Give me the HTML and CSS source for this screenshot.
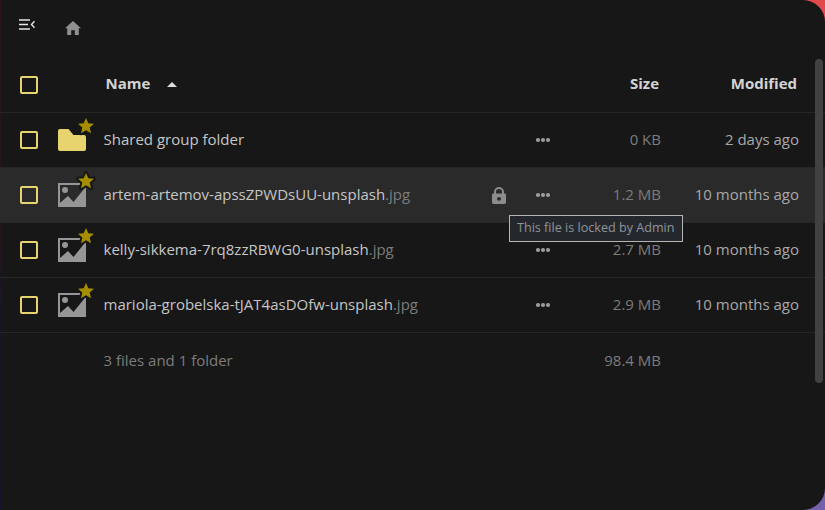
FILE: index.html
```html
<!DOCTYPE html>
<html lang="en">
<head>
<meta charset="utf-8">
<title>Files</title>
<link rel="stylesheet" href="styles.css">
</head>
<body>
<main class="app">
  <nav class="bar">
    <button class="menu" aria-label="Close navigation">
      <svg width="16" height="12" viewBox="0 0 16 12"><path d="M0 1h11M0 5.500h9M0 10h11" stroke="#e6e6e6" stroke-width="1.600" fill="none"/><path d="M15.500 2.200 12.500 5.500 15.500 8.800" stroke="#e6e6e6" stroke-width="1.400" fill="none"/></svg>
    </button>
    <a class="home" aria-label="Home">
      <svg width="16" height="14" viewBox="0 0 16 14"><path d="M8 0 0 7.200h2.200V14h4V9.200h3.600V14h4V7.200H16Z" fill="#8f8f8f"/></svg>
    </a>
  </nav>
  <div class="list">
    <div class="row head">
      <span class="check-cell"><i class="check"></i></span>
      <span class="icon-cell"></span>
      <span class="name sort">Name<i class="caret"></i></span>
      <span class="size">Size</span>
      <span class="date">Modified</span>
    </div>
    <div class="row">
      <span class="check-cell"><i class="check"></i></span>
      <span class="icon-cell">
        <svg width="28" height="22" viewBox="0 0 28 22"><path d="M2 0h8.500l5 6H26a2 2 0 0 1 2 2v12a2 2 0 0 1-2 2H2a2 2 0 0 1-2-2V2a2 2 0 0 1 2-2Z" fill="#e8d46e"/></svg>
        <svg class="star" width="22" height="22" viewBox="-3 -3 22 22"><path d="M8 0l2.300 5.300 5.700.5-4.300 3.800 1.300 5.600L8 12.200 3 15.200l1.300-5.600L0 5.800l5.700-.5Z"/></svg>
      </span>
      <span class="name">Shared group folder</span>
      <span class="lock-cell"></span>
      <span class="more"><i></i><i></i><i></i></span>
      <span class="cell-size">0 KB</span>
      <span class="cell-date">2 days ago</span>
    </div>
    <div class="row active">
      <span class="check-cell"><i class="check"></i></span>
      <span class="icon-cell">
        <svg width="28" height="24" viewBox="0 0 28 24"><path fill-rule="evenodd" d="M0 0h28v24H0ZM2 2v18l8-7 5.500 6L26 6V2ZM7 4a3 3 0 1 0 0 6 3 3 0 0 0 0-6Z" fill="#969696"/></svg>
        <svg class="star" width="22" height="22" viewBox="-3 -3 22 22"><path d="M8 0l2.300 5.300 5.700.5-4.300 3.800 1.300 5.600L8 12.200 3 15.200l1.300-5.600L0 5.800l5.700-.5Z"/></svg>
      </span>
      <span class="name">artem-artemov-apssZPWDsUU-unsplash<em>.jpg</em></span>
      <span class="lock-cell">
        <svg width="14" height="17" viewBox="0 0 14 18" preserveAspectRatio="none"><path fill-rule="evenodd" d="M7 0a5 5 0 0 1 5 5v2h.500A1.500 1.500 0 0 1 14 8.500v8a1.500 1.500 0 0 1-1.500 1.500h-11A1.500 1.500 0 0 1 0 16.500v-8A1.500 1.500 0 0 1 1.500 7H2V5a5 5 0 0 1 5-5Zm0 2a3 3 0 0 0-3 3v2h6V5a3 3 0 0 0-3-3Zm0 8.500a2 2 0 1 0 0 4 2 2 0 0 0 0-4Z" fill="#8c8c8c"/></svg>
      </span>
      <span class="more"><i></i><i></i><i></i></span>
      <span class="cell-size">1.2 MB</span>
      <span class="cell-date">10 months ago</span>
      <span class="tooltip">This file is locked by Admin</span>
    </div>
    <div class="row">
      <span class="check-cell"><i class="check"></i></span>
      <span class="icon-cell">
        <svg width="28" height="24" viewBox="0 0 28 24"><path fill-rule="evenodd" d="M0 0h28v24H0ZM2 2v18l8-7 5.500 6L26 6V2ZM7 4a3 3 0 1 0 0 6 3 3 0 0 0 0-6Z" fill="#969696"/></svg>
        <svg class="star" width="22" height="22" viewBox="-3 -3 22 22"><path d="M8 0l2.300 5.300 5.700.5-4.300 3.800 1.300 5.600L8 12.200 3 15.200l1.300-5.600L0 5.800l5.700-.5Z"/></svg>
      </span>
      <span class="name">kelly-sikkema-7rq8zzRBWG0-unsplash<em>.jpg</em></span>
      <span class="lock-cell"></span>
      <span class="more"><i></i><i></i><i></i></span>
      <span class="cell-size">2.7 MB</span>
      <span class="cell-date">10 months ago</span>
    </div>
    <div class="row">
      <span class="check-cell"><i class="check"></i></span>
      <span class="icon-cell">
        <svg width="28" height="24" viewBox="0 0 28 24"><path fill-rule="evenodd" d="M0 0h28v24H0ZM2 2v18l8-7 5.500 6L26 6V2ZM7 4a3 3 0 1 0 0 6 3 3 0 0 0 0-6Z" fill="#969696"/></svg>
        <svg class="star" width="22" height="22" viewBox="-3 -3 22 22"><path d="M8 0l2.300 5.300 5.700.5-4.300 3.800 1.300 5.600L8 12.200 3 15.200l1.300-5.600L0 5.800l5.700-.5Z"/></svg>
      </span>
      <span class="name">mariola-grobelska-tJAT4asDOfw-unsplash<em>.jpg</em></span>
      <span class="lock-cell"></span>
      <span class="more"><i></i><i></i><i></i></span>
      <span class="cell-size">2.9 MB</span>
      <span class="cell-date">10 months ago</span>
    </div>
    <div class="row foot">
      <span class="check-cell"></span>
      <span class="icon-cell"></span>
      <span class="name">3 files and 1 folder</span>
      <span class="lock-cell"></span>
      <span class="more"></span>
      <span class="cell-size">98.4 MB</span>
      <span class="cell-date"></span>
    </div>
  </div>
  <div class="scrollbar"></div>
</main>
</body>
</html>
```
FILE: styles.css
```css
* { box-sizing: border-box; }
html, body { height: 100%; }
body {
  margin: 0;
  overflow: hidden;
  background: linear-gradient(180deg, #e04a4c 0%, #e04a4c 6%, #7560ab 94%, #7560ab 100%);
  font-family: "Open Sans", "Noto Sans", sans-serif;
  font-size: 15px;
  color: #c6c6c6;
}
.app {
  position: relative;
  height: 510px;
  background: linear-gradient(180deg, #2c1516, #15152c) left / 1px 100% no-repeat, #171717;
  border-radius: 0 22px 22px 0;
}
.bar {
  display: flex;
  align-items: center;
  height: 56px;
  padding-left: 19px;
}
.menu {
  width: 16px;
  height: 12px;
  margin: -7px 0 0 0;
  padding: 0;
  border: 0;
  background: none;
  display: flex;
}
.home { display: flex; margin-left: 30px; }
.row {
  position: relative;
  display: flex;
  align-items: center;
  height: 55px;
  border-top: 1px solid #262626;
}
.name, .size, .date, .cell-size, .cell-date { padding-bottom: 2px; }
.foot .name, .foot .cell-size { padding-bottom: 0; }
.head { height: 56px; border-top: 0; font-weight: 700; color: #d4d4d4; }
.head .check-cell { margin-top: 2px; }
.active { background: #2a2a2a; }
.foot, .foot .cell-size { color: #7c7c7c; }
.check-cell { width: 58px; padding-left: 20px; display: flex; }
.check {
  display: block;
  width: 18px;
  height: 18px;
  border: 2px solid #e8d46e;
  border-radius: 2px;
}
.icon-cell { position: relative; width: 45.500px; height: 40px; display: flex; align-items: center; }
.star {
  position: absolute;
  left: 17px;
  top: -5px;
  fill: #a58d00;
  stroke: #171717;
  stroke-width: 4px;
  stroke-linejoin: round;
  paint-order: stroke;
}
.name { flex: 1; min-width: 0; white-space: nowrap; }
.name em { font-style: normal; color: #7c7c7c; }
.sort { padding-left: 2px; display: flex; align-items: center; }
.caret {
  width: 0;
  height: 0;
  margin-left: 16.500px;
  margin-top: 3px;
  border: 5px solid transparent;
  border-top: 0;
  border-bottom-color: #dcdcdc;
}
.lock-cell { width: 44px; display: flex; }
.more { width: 50px; display: flex; gap: 1.500px; }
.more i { width: 3.500px; height: 3.500px; border-radius: 50%; background: #9a9a9a; }
.size { width: 90px; text-align: right; padding-right: 2px; }
.date { width: 164px; text-align: right; padding-right: 28px; }
.cell-size { width: 75px; text-align: right; color: #7c7c7c; }
.cell-date { width: 164px; text-align: right; padding-right: 26px; color: #a8a8a8; }
.tooltip {
  position: absolute;
  left: 509px;
  top: 47px;
  height: 27px;
  padding: 0 7.500px 0 7px;
  line-height: 23px;
  font-size: 12.600px;
  background: #24272b;
  color: #8e959c;
  border: 1px solid #b4b4b4;
  z-index: 2;
  white-space: nowrap;
}
.scrollbar {
  position: absolute;
  top: 59px;
  right: 2px;
  width: 8px;
  height: 324px;
  border-radius: 4px;
  background: #414141;
}
```
